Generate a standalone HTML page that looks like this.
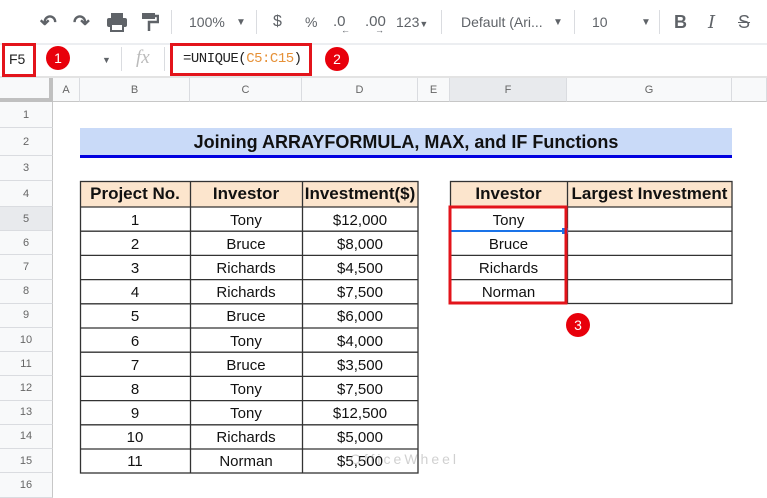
<!DOCTYPE html>
<html><head><style>
*{margin:0;padding:0;box-sizing:border-box}
body{width:767px;height:498px;overflow:hidden;background:#fff;font-family:"Liberation Sans",Arial,sans-serif;position:relative}
.a{position:absolute}
.tb{color:#5f6368;font-size:14px}
.cell{position:absolute;display:flex;align-items:center;justify-content:center;font-size:15px;color:#111}
.rh{position:absolute;left:0;width:53px;background:#f8f9fa;border-bottom:1px solid #dadce0;border-right:1px solid #c7c7c7;color:#666;font-size:11px;display:flex;align-items:center;justify-content:center}
.ch{position:absolute;top:78px;height:24px;background:#f8f9fa;border-right:1px solid #dadce0;border-bottom:1px solid #c7c7c7;color:#666;font-size:11px;display:flex;align-items:center;justify-content:center}
.circ{position:absolute;width:24px;height:24px;border-radius:50%;background:#e8000b;color:#fff;font-size:14px;display:flex;align-items:center;justify-content:center}
td{padding-top:2px}
</style></head><body>
<div class="a tb" style="left:40px;top:10px;font-size:20px;font-weight:bold">&#8630;</div>
<div class="a tb" style="left:73px;top:10px;font-size:20px;font-weight:bold">&#8631;</div>
<svg class="a" style="left:106px;top:12px" width="22" height="20" viewBox="0 0 22 20"><rect x="5" y="1" width="12" height="5" fill="#5f6368"/><rect x="1" y="6" width="20" height="9" rx="2" fill="#5f6368"/><rect x="5" y="12" width="12" height="7" fill="#fff" stroke="#5f6368" stroke-width="2"/></svg>
<svg class="a" style="left:141px;top:12px" width="18" height="20" viewBox="0 0 18 20"><rect x="1" y="1" width="13" height="6" fill="#5f6368"/><path d="M14 4h3v6H8v9" stroke="#5f6368" stroke-width="2.5" fill="none"/></svg>
<div class="a" style="left:171px;top:10px;width:1px;height:24px;background:#dadce0"></div>
<div class="a tb" style="left:189px;top:14px">100%</div>
<div class="a tb" style="left:236px;top:17px;font-size:10px">&#9660;</div>
<div class="a" style="left:256px;top:10px;width:1px;height:24px;background:#dadce0"></div>
<div class="a tb" style="left:273px;top:13px;font-size:16px">$</div>
<div class="a tb" style="left:305px;top:14px">%</div>
<div class="a tb" style="left:333px;top:13px;font-size:15px">.0</div>
<div class="a tb" style="left:341px;top:25px;font-size:9px">&#8592;</div>
<div class="a tb" style="left:365px;top:13px;font-size:15px">.00</div>
<div class="a tb" style="left:375px;top:25px;font-size:9px">&#8594;</div>
<div class="a tb" style="left:396px;top:14px">123<span style="font-size:9px">&#9660;</span></div>
<div class="a" style="left:441px;top:10px;width:1px;height:24px;background:#dadce0"></div>
<div class="a tb" style="left:461px;top:14px">Default (Ari...</div>
<div class="a tb" style="left:553px;top:17px;font-size:10px">&#9660;</div>
<div class="a" style="left:574px;top:10px;width:1px;height:24px;background:#dadce0"></div>
<div class="a tb" style="left:592px;top:14px">10</div>
<div class="a tb" style="left:641px;top:17px;font-size:10px">&#9660;</div>
<div class="a" style="left:659px;top:10px;width:1px;height:24px;background:#dadce0"></div>
<div class="a tb" style="left:674px;top:12px;font-size:18px;font-weight:bold">B</div>
<div class="a tb" style="left:708px;top:12px;font-size:18px;font-style:italic;font-family:'DejaVu Serif',serif">I</div>
<div class="a tb" style="left:738px;top:12px;font-size:18px;text-decoration:line-through">S</div>
<div class="a" style="left:0;top:43px;width:767px;height:2px;background:#eceef1"></div>
<div class="a" style="left:9px;top:51px;font-size:14px;color:#222">F5</div>
<div class="a tb" style="left:102px;top:55px;font-size:9px">&#9660;</div>
<div class="a" style="left:121px;top:47px;width:1px;height:24px;background:#dadce0"></div>
<div class="a" style="left:136px;top:47px;font-size:19px;color:#bbb;font-style:italic;font-family:'Liberation Serif',serif">fx</div>
<div class="a" style="left:164px;top:47px;width:1px;height:24px;background:#dadce0"></div>
<div class="a" style="left:183px;top:51px;font-size:14px;color:#222;font-family:'Liberation Mono',monospace;letter-spacing:-0.5px">=UNIQUE(<span style="color:#e69138">C5:C15</span>)</div>
<div class="a" style="left:0;top:76px;width:767px;height:2px;background:#e3e3e3"></div>
<div class="a" style="left:2px;top:43px;width:34px;height:34px;border:3px solid #e3141b"></div>
<div class="circ" style="left:46px;top:46px">1</div>
<div class="a" style="left:170px;top:43px;width:142px;height:33px;border:3px solid #e3141b"></div>
<div class="circ" style="left:325px;top:47px">2</div>
<div class="a" style="left:0;top:78px;width:53px;height:24px;background:#f8f9fa;border-right:4px solid #c0c0c0;border-bottom:4px solid #c0c0c0"></div>
<div class="ch" style="left:53px;width:27px">A</div>
<div class="ch" style="left:80px;width:110px">B</div>
<div class="ch" style="left:190px;width:112px">C</div>
<div class="ch" style="left:302px;width:116px">D</div>
<div class="ch" style="left:418px;width:32px">E</div>
<div class="ch" style="left:450px;width:117px;background:#e8eaed">F</div>
<div class="ch" style="left:567px;width:165px">G</div>
<div class="ch" style="left:732px;width:35px"></div>
<div class="rh" style="top:102px;height:26px">1</div>
<div class="rh" style="top:128px;height:28px">2</div>
<div class="rh" style="top:156px;height:25px">3</div>
<div class="rh" style="top:181px;height:26px">4</div>
<div class="rh" style="top:207px;height:24.2px;background:#e8eaed">5</div>
<div class="rh" style="top:231.2px;height:24.2px">6</div>
<div class="rh" style="top:255.4px;height:24.2px">7</div>
<div class="rh" style="top:279.6px;height:24.2px">8</div>
<div class="rh" style="top:303.8px;height:24.2px">9</div>
<div class="rh" style="top:328px;height:24.2px">10</div>
<div class="rh" style="top:352.2px;height:24.2px">11</div>
<div class="rh" style="top:376.4px;height:24.2px">12</div>
<div class="rh" style="top:400.6px;height:24.2px">13</div>
<div class="rh" style="top:424.8px;height:24.2px">14</div>
<div class="rh" style="top:449px;height:24.2px">15</div>
<div class="rh" style="top:473.2px;height:24.8px">16</div>
<div class="a" style="left:80px;top:128px;width:652px;height:27px;background:#c9daf8;display:flex;align-items:center;justify-content:center;font-weight:bold;font-size:18px;color:#111;padding-top:2px">Joining ARRAYFORMULA, MAX, and IF Functions</div>
<div class="a" style="left:80px;top:155px;width:652px;height:3px;background:#0000e0"></div>
<svg class="a" style="left:0;top:0" width="767" height="498">
<rect x="80" y="181" width="338" height="26" fill="#fce5cd"/>
<rect x="450" y="181" width="282" height="26" fill="#fce5cd"/>
<g stroke="#333" stroke-width="1.3" fill="none">
<rect x="80.5" y="181.5" width="337.5" height="291.5"/>
<line x1="190.5" y1="181" x2="190.5" y2="473"/><line x1="302.5" y1="181" x2="302.5" y2="473"/>
<line x1="80" y1="207" x2="418" y2="207"/><line x1="80" y1="231.2" x2="418" y2="231.2"/><line x1="80" y1="255.4" x2="418" y2="255.4"/><line x1="80" y1="279.6" x2="418" y2="279.6"/><line x1="80" y1="303.8" x2="418" y2="303.8"/><line x1="80" y1="328" x2="418" y2="328"/><line x1="80" y1="352.2" x2="418" y2="352.2"/><line x1="80" y1="376.4" x2="418" y2="376.4"/><line x1="80" y1="400.6" x2="418" y2="400.6"/><line x1="80" y1="424.8" x2="418" y2="424.8"/><line x1="80" y1="449" x2="418" y2="449"/>
<rect x="450.5" y="181.5" width="281.5" height="122"/>
<line x1="567.5" y1="181" x2="567.5" y2="304"/>
<line x1="450" y1="207" x2="732" y2="207"/><line x1="450" y1="231.2" x2="732" y2="231.2"/><line x1="450" y1="255.4" x2="732" y2="255.4"/><line x1="450" y1="279.6" x2="732" y2="279.6"/>
</g>
<line x1="451" y1="231" x2="565" y2="231" stroke="#1a73e8" stroke-width="2"/>
<rect x="562" y="228" width="6" height="6" fill="#1a73e8"/>
<rect x="450" y="207" width="116" height="96" stroke="#e3141b" stroke-width="3" fill="none"/>
</svg>
<div class="cell" style="left:80px;top:181px;width:110px;height:26px;font-weight:bold;font-size:17px">Project No.</div>
<div class="cell" style="left:190px;top:181px;width:112px;height:26px;font-weight:bold;font-size:17px">Investor</div>
<div class="cell" style="left:302px;top:181px;width:116px;height:26px;font-weight:bold;font-size:17px">Investment($)</div>
<div class="cell" style="left:450px;top:181px;width:117px;height:26px;font-weight:bold;font-size:17px">Investor</div>
<div class="cell" style="left:567px;top:181px;width:165px;height:26px;font-weight:bold;font-size:17px">Largest Investment</div>
<div class="a" style="left:80px;top:207px">
<table style="border-collapse:collapse;font-size:15px;color:#111;text-align:center">
<tr style="height:24.2px"><td style="width:110px">1</td><td style="width:112px">Tony</td><td style="width:116px">$12,000</td></tr>
<tr style="height:24.2px"><td>2</td><td>Bruce</td><td>$8,000</td></tr>
<tr style="height:24.2px"><td>3</td><td>Richards</td><td>$4,500</td></tr>
<tr style="height:24.2px"><td>4</td><td>Richards</td><td>$7,500</td></tr>
<tr style="height:24.2px"><td>5</td><td>Bruce</td><td>$6,000</td></tr>
<tr style="height:24.2px"><td>6</td><td>Tony</td><td>$4,000</td></tr>
<tr style="height:24.2px"><td>7</td><td>Bruce</td><td>$3,500</td></tr>
<tr style="height:24.2px"><td>8</td><td>Tony</td><td>$7,500</td></tr>
<tr style="height:24.2px"><td>9</td><td>Tony</td><td>$12,500</td></tr>
<tr style="height:24.2px"><td>10</td><td>Richards</td><td>$5,000</td></tr>
<tr style="height:24.2px"><td>11</td><td>Norman</td><td>$5,500</td></tr>
</table></div>
<div class="a" style="left:450px;top:207px">
<table style="border-collapse:collapse;font-size:15px;color:#111;text-align:center">
<tr style="height:24.2px"><td style="width:117px">Tony</td></tr>
<tr style="height:24.2px"><td>Bruce</td></tr>
<tr style="height:24.2px"><td>Richards</td></tr>
<tr style="height:24.2px"><td>Norman</td></tr>
</table></div>
<div class="circ" style="left:566px;top:313px">3</div>
<div class="a" style="left:350px;top:451px;font-size:14px;color:rgba(120,120,120,0.35);letter-spacing:3px">OfficeWheel</div>
</body></html>
